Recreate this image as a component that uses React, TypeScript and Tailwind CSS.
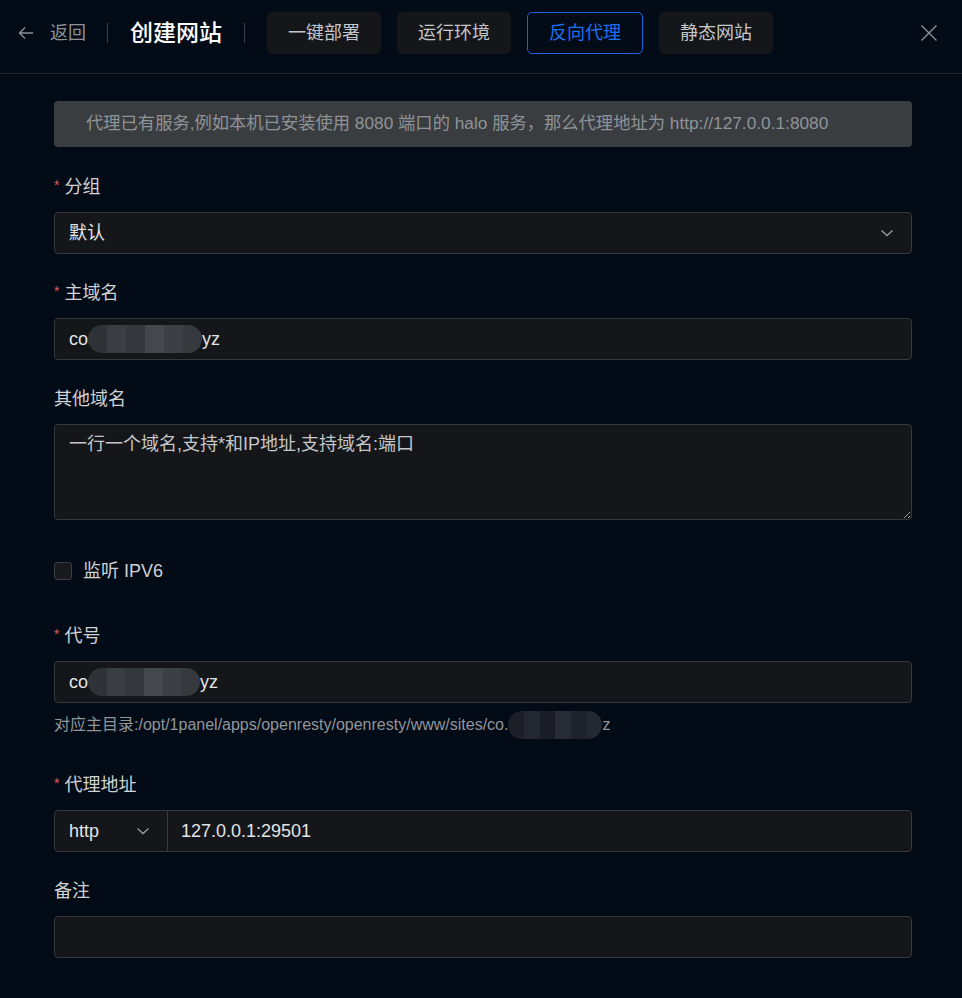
import React from "react";

const font = { fontFamily: '"Liberation Sans", "Noto Sans CJK SC", sans-serif' };

// mosaic blob that hides part of the domain name
const Redact: React.FC<{ w: number; dark?: boolean }> = ({ w, dark }) => {
  const shades = dark
    ? ["#1c2026", "#222830", "#1a1e24", "#262c33", "#1e232a", "#232930"]
    : ["#2f3236", "#3a3d41", "#34373b", "#44474b", "#3c3f43", "#36393d"];
  return (
    <span
      className="inline-flex h-[28px] rounded-full overflow-hidden align-middle"
      style={{ width: w }}
    >
      {shades.map((c, i) => (
        <span key={i} className="flex-1 h-full" style={{ background: c }} />
      ))}
    </span>
  );
};

const Chevron = () => (
  <svg width="16" height="16" viewBox="0 0 16 16" fill="none" stroke="#9a9ca0" strokeWidth="1.3">
    <path d="M2.5 5.5 8 10.5l5.5-5" />
  </svg>
);

const Label: React.FC<{ text: string; required?: boolean }> = ({ text, required }) => (
  <div className="h-[24px] flex items-center text-[18px] text-[#d0d2d4] mb-[13px]">
    {required && <span className="text-[#e4575a] text-[14px] mr-[5px] -mt-[4px]">*</span>}
    {text}
  </div>
);

const boxCls =
  "h-[42px] rounded-[4px] border border-[#35383c] bg-[#141619] flex items-center px-[14px] text-[18px] text-[#e2e4e6]";

const App: React.FC = () => {
  const tabs = ["一键部署", "运行环境", "反向代理", "静态网站"];
  return (
    <div className="min-h-screen w-full bg-[#020b16]" style={font}>
      <header className="h-[74px] border-b border-[#1e232a] pt-[12px] pl-[18px] pr-[24px]">
        <div className="h-[42px] flex items-center">
          <svg width="16" height="16" viewBox="0 0 16 16" fill="none" stroke="#8e9195" strokeWidth="1.3">
            <path d="M15 8H1.5M7 2.5 1.5 8 7 13.5" />
          </svg>
          <span className="ml-[16px] text-[18px] text-[#8e9195]">返回</span>
          <span className="ml-[21px] w-px h-[20px] bg-[#3a3d42]" />
          <span className="ml-[22px] text-[23px] font-medium text-white">创建网站</span>
          <span className="ml-[22px] w-px h-[20px] bg-[#3a3d42]" />
          <div className="ml-[22px] flex gap-[16px]">
            {tabs.map((t) =>
              t === "反向代理" ? (
                <div
                  key={t}
                  className="h-[42px] w-[116px] rounded-[5px] border border-[#1766e0] text-[#1f6ff0] text-[18px] flex items-center justify-center"
                >
                  {t}
                </div>
              ) : (
                <div
                  key={t}
                  className="h-[42px] w-[114px] rounded-[5px] bg-[#141619] text-[#c5c7ca] text-[18px] flex items-center justify-center"
                >
                  {t}
                </div>
              )
            )}
          </div>
          <div className="flex-1" />
          <svg width="18" height="18" viewBox="0 0 18 18" fill="none" stroke="#8e9195" strokeWidth="1.4">
            <path d="M1.5 1.5 16.5 16.5M16.5 1.5 1.5 16.5" />
          </svg>
        </div>
      </header>

      <main className="pl-[54px] pr-[50px] pt-[27px] pb-[40px]">
        <div className="h-[46px] rounded-[4px] bg-[#3a3d40] flex items-center pl-[32px] text-[17.3px] text-[#8f9398]">
          代理已有服务,例如本机已安装使用 8080 端口的 halo 服务，那么代理地址为 http://127.0.0.1:8080
        </div>

        <div className="mt-[28px]">
          <Label text="分组" required />
          <div className={boxCls + " justify-between"}>
            <span>默认</span>
            <span className="mr-[2px]">
              <Chevron />
            </span>
          </div>
        </div>

        <div className="mt-[27px]">
          <Label text="主域名" required />
          <div className={boxCls}>
            <span>co</span>
            <Redact w={114} />
            <span>yz</span>
          </div>
        </div>

        <div className="mt-[27px]">
          <Label text="其他域名" />
          <textarea
            readOnly
            placeholder="一行一个域名,支持*和IP地址,支持域名:端口"
            className="block w-full h-[96px] rounded-[4px] border border-[#35383c] bg-[#141619] px-[14px] py-[6px] text-[18px] text-[#e2e4e6] placeholder:text-[#c4c6c9] outline-none resize-y"
            style={font}
          />
        </div>

        <div className="mt-[42px] flex items-center h-[18px]">
          <span className="w-[18px] h-[18px] rounded-[3px] border border-[#3a3d41] bg-[#18191c]" />
          <span className="ml-[11px] text-[18px] text-[#d0d2d4]">监听 IPV6</span>
        </div>

        <div className="mt-[44px]">
          <Label text="代号" required />
          <div className={boxCls}>
            <span>co</span>
            <Redact w={112} />
            <span>yz</span>
          </div>
          <div className="mt-[11px] h-[22px] flex items-center text-[16px] text-[#92959a]">
            对应主目录:/opt/1panel/apps/openresty/openresty/www/sites/co.
            <Redact w={94} dark />
            <span>z</span>
          </div>
        </div>

        <div className="mt-[37px]">
          <Label text="代理地址" required />
          <div className="h-[42px] rounded-[4px] border border-[#35383c] bg-[#141619] flex text-[18px] text-[#e2e4e6]">
            <div className="w-[113px] flex items-center justify-between pl-[14px] pr-[16px] border-r border-[#35383c]">
              <span>http</span>
              <Chevron />
            </div>
            <div className="flex items-center pl-[13px]">127.0.0.1:29501</div>
          </div>
        </div>

        <div className="mt-[27px]">
          <Label text="备注" />
          <div className={boxCls} />
        </div>
      </main>
    </div>
  );
};

export default App;
